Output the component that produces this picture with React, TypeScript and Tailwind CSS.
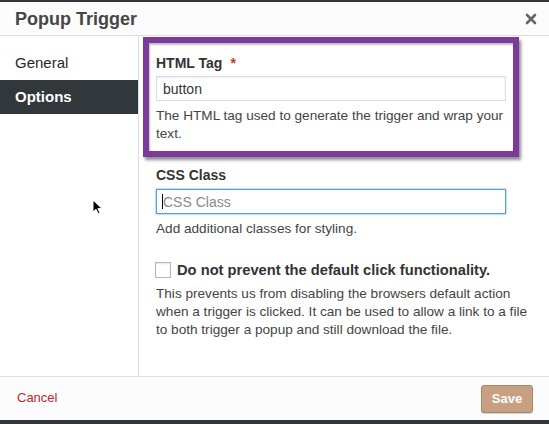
import React from "react";

export default function App() {
  return (
    <div
      className="relative w-[549px] h-[424px] flex flex-col bg-white overflow-hidden text-[#444]"
      style={{ fontFamily: '"Liberation Sans", Arial, sans-serif' }}
    >
      <div className="h-[2px] bg-[#32373c] shrink-0" />
      <header className="h-[34px] shrink-0 border-b border-[#dddddd] bg-[#fcfcfc] flex items-center justify-between pl-[15px] pr-[12px]">
        <h1 className="text-[18px] font-bold text-[#464646] leading-none">Popup Trigger</h1>
        <svg width="12" height="12" viewBox="0 0 12 12" className="mt-[1px]">
          <path d="M2 2 L10 10 M10 2 L2 10" stroke="#666" strokeWidth="2.6" strokeLinecap="round" />
        </svg>
      </header>

      <div className="flex flex-1 min-h-0">
        <nav className="w-[139px] shrink-0 border-r border-[#dddddd] pt-[10px]">
          <div className="h-[34px] flex items-center pl-[15px] text-[15px] text-[#23282d]">General</div>
          <div className="h-[34px] flex items-center pl-[15px] text-[15px] font-bold text-white bg-[#32373c]">Options</div>
        </nav>

        <main className="flex-1 pl-[17px] pr-[16px] pt-[18px]">
          <div className="flex items-center h-[18px] text-[14px] font-bold text-[#333]">
            HTML Tag
            <span className="ml-[8px] text-[#c0392b]">*</span>
          </div>
          <input
            readOnly
            defaultValue="button"
            className="mt-[4px] block w-[350px] h-[25px] border border-[#dddddd] px-[6px] text-[14px] text-[#32373c] bg-white shadow-[inset_0_1px_2px_rgba(0,0,0,0.07)] outline-none"
            style={{ fontFamily: '"Liberation Sans", Arial, sans-serif' }}
          />
          <p className="mt-[6px] text-[13.6px] leading-[18px] whitespace-nowrap">
            The HTML tag used to generate the trigger and wrap your
            <br />
            text.
          </p>

          <div className="mt-[23px] flex items-center h-[18px] text-[14px] font-bold text-[#333]">CSS Class</div>
          <div className="relative mt-[5px] w-[350px]">
            <input
              readOnly
              placeholder="CSS Class"
              className="block w-[350px] h-[25px] border border-[#5b9dd9] px-[6px] text-[14px] bg-white shadow-[0_0_2px_rgba(30,140,190,0.8)] outline-none placeholder:text-[#8a8a8a]"
              style={{ fontFamily: '"Liberation Sans", Arial, sans-serif' }}
            />
            <span className="absolute left-[6px] top-[5px] w-[1px] h-[15px] bg-black" />
          </div>
          <p className="mt-[6px] text-[13.6px] leading-[18px] whitespace-nowrap">Add additional classes for styling.</p>

          <div className="mt-[23px] flex items-center h-[18px]">
            <span className="-ml-[1px] w-[16px] h-[16px] border border-[#b4b9be] bg-white shadow-[inset_0_1px_2px_rgba(0,0,0,0.1)] shrink-0" />
            <span className="ml-[6px] text-[14.7px] font-bold text-[#333] whitespace-nowrap">
              Do not prevent the default click functionality.
            </span>
          </div>
          <p className="mt-[6px] text-[13.6px] leading-[18px] whitespace-nowrap">
            This prevents us from disabling the browsers default action
            <br />
            when a trigger is clicked. It can be used to allow a link to a file
            <br />
            to both trigger a popup and still download the file.
          </p>
        </main>
      </div>

      <footer className="h-[44px] shrink-0 border-t border-[#dddddd] bg-[#fcfcfc] flex items-center justify-between pl-[17px] pr-[16px]">
        <span className="text-[13px] text-[#b32d2e] -mt-[2px]">Cancel</span>
        <button className="w-[52px] h-[28px] rounded-[3px] border border-[#a98566] bg-[#c6a081] text-white text-[13px] font-bold shadow-[0_1px_0_rgba(0,0,0,0.15)]">
          Save
        </button>
      </footer>
      <div className="h-[4px] bg-[#32373c] shrink-0" />

      {/* highlight annotation */}
      <div className="absolute left-[143px] top-[37px] w-[376px] h-[120px] border-[6px] border-[#7a3b9b] shadow-[2px_3px_3px_rgba(0,0,0,0.45),inset_1px_2px_2px_rgba(0,0,0,0.25)] pointer-events-none" />

      {/* mouse pointer */}
      <svg className="absolute left-[92px] top-[199px]" width="11" height="16" viewBox="0 0 11 16">
        <path d="M1 1 V13 L4 10.3 L6.2 14.8 L8 14 L5.9 9.6 H10 Z" fill="#000" stroke="#fff" strokeWidth="1" strokeLinejoin="round" />
      </svg>
    </div>
  );
}
